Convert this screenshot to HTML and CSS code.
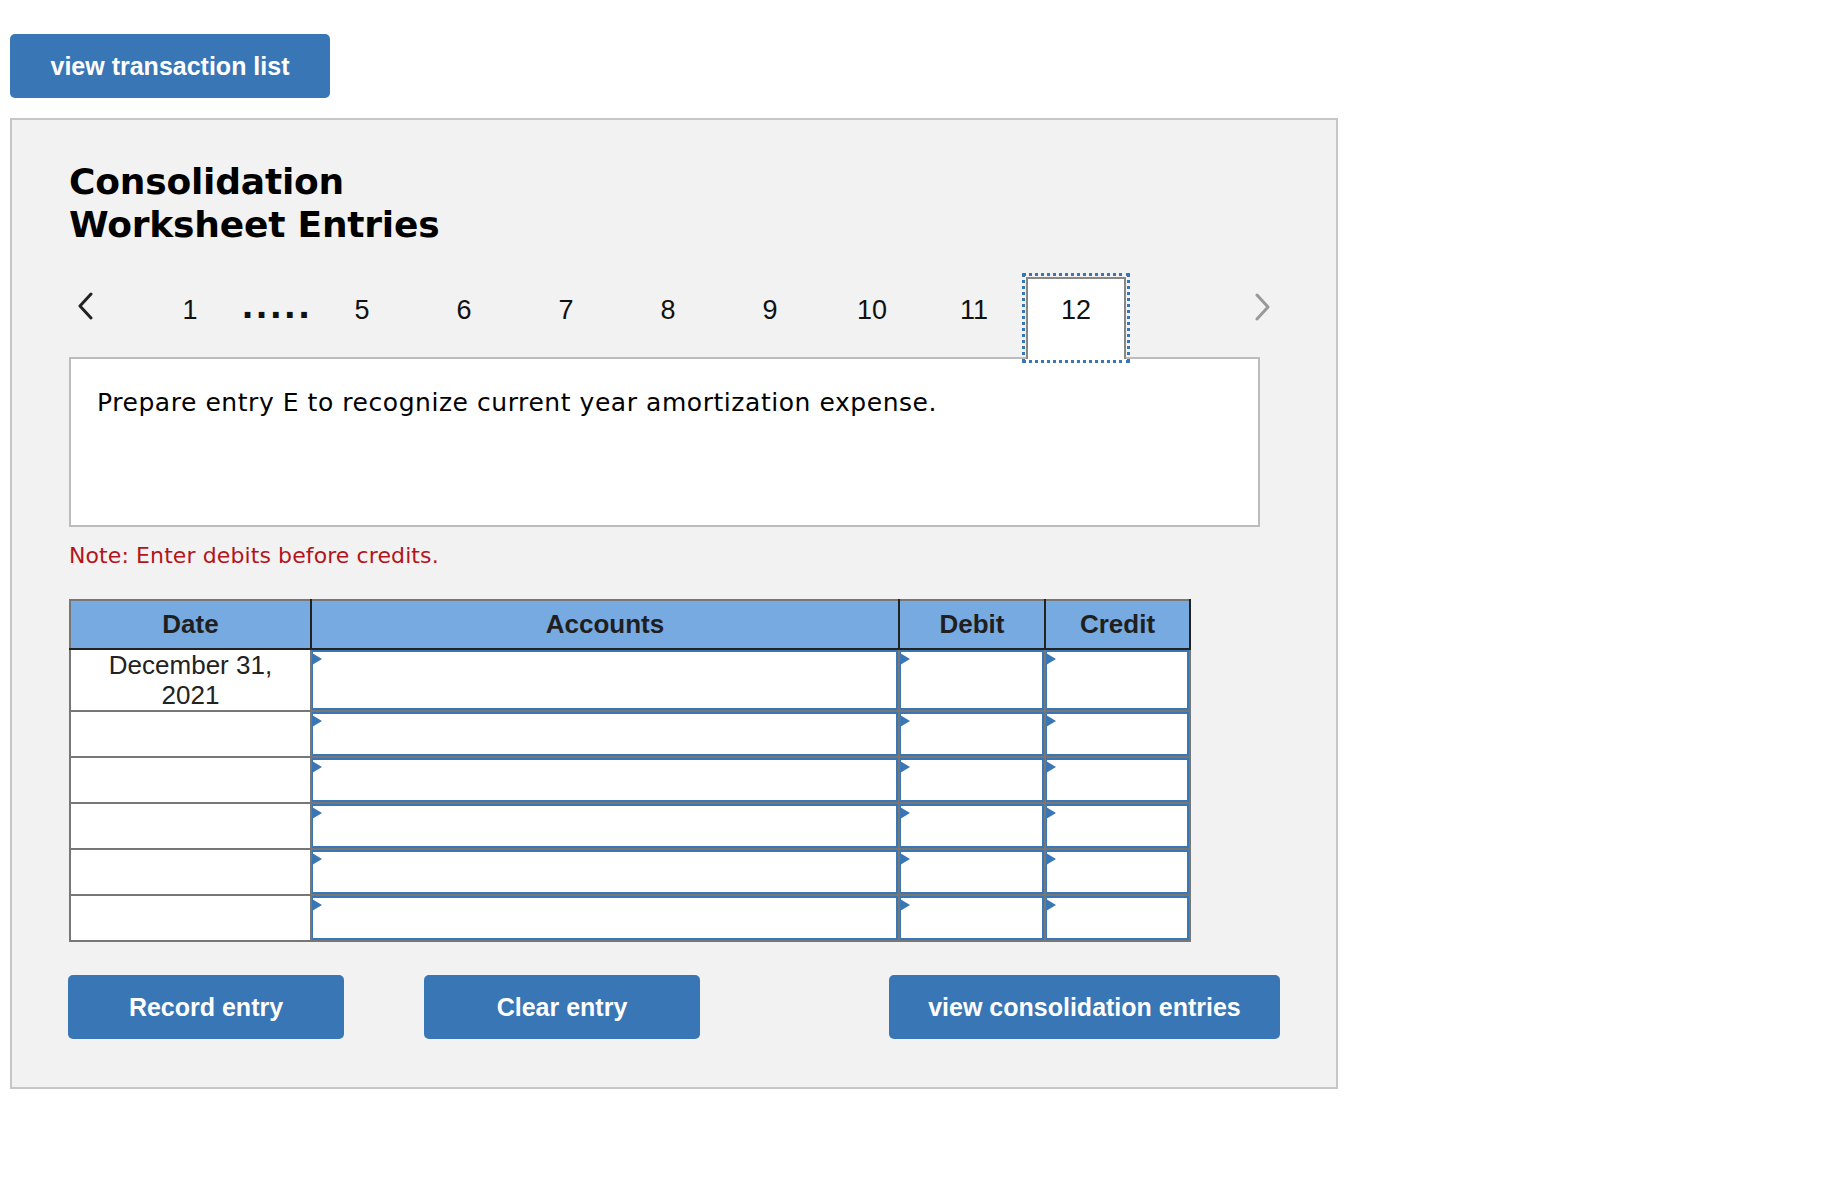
FILE: index.html
```html
<!DOCTYPE html>
<html lang="en">
<head>
    <meta charset="UTF-8">
    <title>Consolidation Worksheet Entries</title>
    <link rel="stylesheet" href="styles.css">
</head>
<body>

<div class="page">
    <button class="btn btn-transactions">view transaction list</button>

    <div class="panel">
        <h1 class="title">Consolidation<br>Worksheet Entries</h1>

        <div class="pager">
            <div class="pager-prev">
                <svg width="16" height="28" viewBox="0 0 16 28"><path d="M14 2 L3 14 L14 26" fill="none" stroke="#222" stroke-width="3" stroke-linecap="round" stroke-linejoin="round"/></svg>
            </div>
            <div class="page-num">1</div>
            <div class="page-dots">.....</div>
            <div class="page-num">5</div>
            <div class="page-num">6</div>
            <div class="page-num">7</div>
            <div class="page-num">8</div>
            <div class="page-num">9</div>
            <div class="page-num">10</div>
            <div class="page-num">11</div>
            <div class="page-num current">12</div>
            <div class="pager-next">
                <svg width="16" height="28" viewBox="0 0 16 28"><path d="M2 2 L13 14 L2 26" fill="none" stroke="#999" stroke-width="3" stroke-linecap="round" stroke-linejoin="round"/></svg>
            </div>
        </div>

        <div class="prompt">Prepare entry E to recognize current year amortization expense.</div>

        <p class="note">Note: Enter debits before credits.</p>

        <table class="journal">
            <thead>
                <tr>
                    <th class="col-date">Date</th>
                    <th class="col-account">Accounts</th>
                    <th class="col-debit">Debit</th>
                    <th class="col-credit">Credit</th>
                </tr>
            </thead>
            <tbody>
                <tr class="first">
                    <td class="date">December 31,<br>2021</td>
                    <td class="entry"><input type="text" class="field"></td>
                    <td class="entry"><input type="text" class="field"></td>
                    <td class="entry"><input type="text" class="field"></td>
                </tr>
                <tr>
                    <td class="date"></td>
                    <td class="entry"><input type="text" class="field"></td>
                    <td class="entry"><input type="text" class="field"></td>
                    <td class="entry"><input type="text" class="field"></td>
                </tr>
                <tr>
                    <td class="date"></td>
                    <td class="entry"><input type="text" class="field"></td>
                    <td class="entry"><input type="text" class="field"></td>
                    <td class="entry"><input type="text" class="field"></td>
                </tr>
                <tr>
                    <td class="date"></td>
                    <td class="entry"><input type="text" class="field"></td>
                    <td class="entry"><input type="text" class="field"></td>
                    <td class="entry"><input type="text" class="field"></td>
                </tr>
                <tr>
                    <td class="date"></td>
                    <td class="entry"><input type="text" class="field"></td>
                    <td class="entry"><input type="text" class="field"></td>
                    <td class="entry"><input type="text" class="field"></td>
                </tr>
                <tr>
                    <td class="date"></td>
                    <td class="entry"><input type="text" class="field"></td>
                    <td class="entry"><input type="text" class="field"></td>
                    <td class="entry"><input type="text" class="field"></td>
                </tr>
            </tbody>
        </table>

        <div class="actions">
            <button class="btn btn-record">Record entry</button>
            <button class="btn btn-clear">Clear entry</button>
            <button class="btn btn-view">view consolidation entries</button>
        </div>
    </div>
</div>

</body>
</html>
```

FILE: styles.css
```css
body {
    margin: 0;
    font-family: "Liberation Sans", Arial, sans-serif;
    background-color: #fff;
    color: #000;
}
.page {
    padding: 34px 0 0 10px;
}
.btn {
    height: 64px;
    padding: 0;
    border: none;
    border-radius: 5px;
    background-color: #3976b6;
    color: #fff;
    font: bold 25px "Liberation Sans", Arial, sans-serif;
    cursor: pointer;
}
.btn-transactions {
    width: 320px;
}
.panel {
    width: 1328px;
    box-sizing: border-box;
    margin-top: 20px;
    padding: 40px 0 48px 57px;
    border: 2px solid #c6c6c6;
    background-color: #f2f2f2;
}
.title {
    margin: 0;
    font: bold 36px/43px "DejaVu Sans", Verdana, sans-serif;
    letter-spacing: -0.2px;
}

/* page navigation */
.pager {
    display: flex;
    height: 82px;
    margin-top: 31px;
    margin-bottom: -2px;
}
.pager-prev {
    width: 71px;
    box-sizing: border-box;
    padding: 15px 0 0 8px;
}
.pager-next {
    margin-left: 127px;
    padding-top: 16px;
}
.pager svg {
    display: block;
}
.page-num {
    width: 100px;
    margin-right: 2px;
    box-sizing: border-box;
    padding-top: 16px;
    border: 2px solid transparent;
    border-bottom: none;
    text-align: center;
    font-size: 27px;
    line-height: 30px;
    color: #111;
}
.page-dots {
    width: 68px;
    margin-right: 2px;
    padding-top: 12px;
    text-align: center;
    font-weight: bold;
    font-size: 40px;
    line-height: 30px;
    letter-spacing: 3px;
    color: #111;
}
.page-num.current {
    position: relative;
    z-index: 1;
    background-color: #fff;
    border-color: #878787;
    outline: 3px dotted #3976b6;
    outline-offset: 1px;
}

.prompt {
    width: 1191px;
    height: 170px;
    box-sizing: border-box;
    padding: 29px 26px;
    border: 2px solid #bcbcbc;
    background-color: #fff;
    font: 25px/30px "DejaVu Sans", Verdana, sans-serif;
    letter-spacing: 0.55px;
}
.note {
    margin: 16px 0 0;
    font: 22px/26px "DejaVu Sans", Verdana, sans-serif;
    letter-spacing: 0.1px;
    color: #b3141a;
}

/* journal table */
.journal {
    margin-top: 30px;
    border-collapse: collapse;
    border: 2px solid #777;
    table-layout: fixed;
}
.journal th {
    height: 47px;
    padding: 0;
    background-color: #77aae0;
    border: 2px solid #222;
    border-top-color: #777;
    font-size: 26px;
    font-weight: bold;
    color: #1f1f1f;
}
.journal th.col-date {
    border-left-color: #777;
}
.col-date { width: 239px; }
.col-account { width: 586px; }
.col-debit { width: 144px; }
.col-credit { width: 143px; }
.journal td {
    height: 44px;
    padding: 0;
    border: 2px solid #777;
    background-color: #fff;
}
.journal tr.first td {
    height: 60px;
}
.journal td.date {
    text-align: center;
    font-size: 26px;
    line-height: 30px;
    color: #222;
}
.journal td.entry {
    position: relative;
}
.journal td.entry::before {
    content: "";
    position: absolute;
    left: 0;
    top: 3px;
    border-left: 10px solid #3976b6;
    border-top: 6px solid transparent;
    border-bottom: 6px solid transparent;
}
.field {
    display: block;
    width: 100%;
    height: 44px;
    box-sizing: border-box;
    margin: 0;
    padding: 0 8px;
    border: 2px solid #3976b6;
    border-left-width: 1px;
    background-color: #fff;
    font-size: 22px;
}
.journal tr.first .field {
    height: 60px;
}

.actions {
    display: flex;
    margin-top: 33px;
    margin-left: -1px;
}
.btn-record,
.btn-clear {
    width: 276px;
}
.btn-clear {
    margin-left: 80px;
}
.btn-view {
    width: 391px;
    margin-left: 189px;
}
```
